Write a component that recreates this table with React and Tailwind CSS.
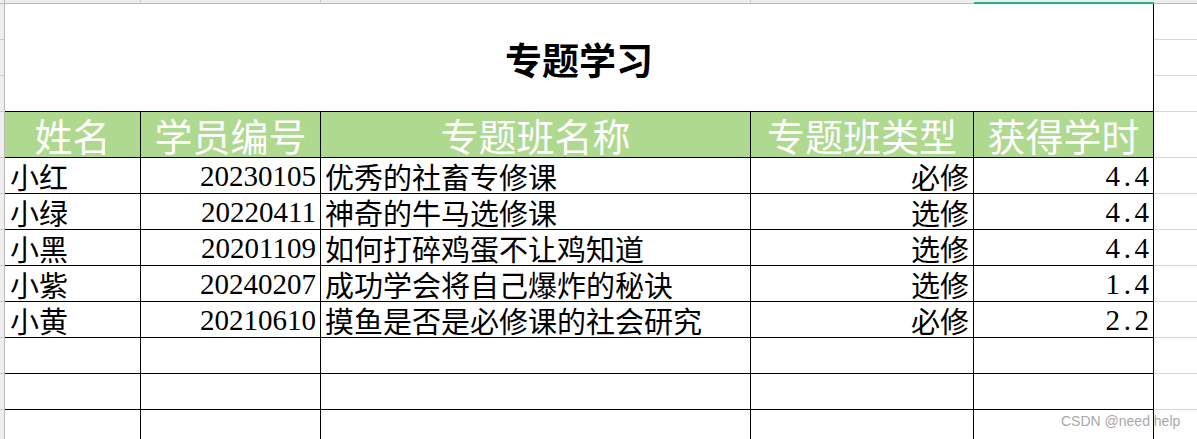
import React from "react";

const cjk = "font-['Noto_Sans_CJK_SC',sans-serif]";
const num = "font-['Liberation_Serif','Noto_Sans_CJK_SC',serif]";

const rows = [
  ["小红", "20230105", "优秀的社畜专修课", "必修", "4.4"],
  ["小绿", "20220411", "神奇的牛马选修课", "选修", "4.4"],
  ["小黑", "20201109", "如何打碎鸡蛋不让鸡知道", "选修", "4.4"],
  ["小紫", "20240207", "成功学会将自己爆炸的秘诀", "选修", "1.4"],
  ["小黄", "20210610", "摸鱼是否是必修课的社会研究", "必修", "2.2"],
];

const headers = ["姓名", "学员编号", "专题班名称", "专题班类型", "获得学时"];

// Excel-ish gutter cell on the left
const Gutter = () => (
  <div className="col-start-1 bg-[#efeeec] border-r border-b border-r-[#bababa] border-b-[#c9c9c9]" />
);

// empty sheet cell right of the table
const Spare = () => <div className="col-start-7 border-b border-[#d6d6d6]" />;

// decimal in SimSun-like half-width cells
const Decimal = ({ value }) => (
  <span>
    {value.split("").map((ch, i) => (
      <span key={i} className="inline-block w-[0.5em] text-center">
        {ch}
      </span>
    ))}
  </span>
);

const cell =
  "border-r border-b border-black flex items-end pb-[2px] leading-none text-[29px] text-black";

const Txt = ({ children }) => (
  <span className="block h-[29px] leading-[29px] whitespace-nowrap">{children}</span>
);

export default function App() {
  return (
    <div className="relative w-[1197px] h-[439px] overflow-hidden bg-white">
      <div className="grid grid-cols-[5px_136px_180px_430px_223px_180px_43px] grid-rows-[4px_36px_36px_36px_46px_repeat(8,36px)]">
        {/* column header strip */}
        <div className="bg-[#efeeec] border-r border-b border-[#bababa]" />
        <div className="bg-[#efeeec] border-r border-b border-r-[#cfcfcf] border-b-[#bababa]" />
        <div className="bg-[#efeeec] border-r border-b border-r-[#cfcfcf] border-b-[#bababa]" />
        <div className="bg-[#efeeec] border-r border-b border-r-[#cfcfcf] border-b-[#bababa]" />
        <div className="bg-[#efeeec] border-b border-[#bababa]" />
        <div className="bg-[#efeeec] border-b-2 border-[#1fb47a]" />
        <div className="bg-[#efeeec] border-b border-[#bababa]" />

        {/* title block */}
        <Gutter />
        <div
          className={`col-span-5 row-span-3 border-r border-b border-black flex justify-center items-start pt-[37px] ${cjk}`}
        >
          <span className="text-[37px] leading-none font-semibold text-black">专题学习</span>
        </div>
        <Spare />
        <Gutter />
        <Spare />
        <Gutter />
        <Spare />

        {/* header row */}
        <Gutter />
        {headers.map((h) => (
          <div
            key={h}
            className={`bg-[#b0d990] border-r border-b border-black flex justify-center items-end pb-[3px] leading-none text-[38px] text-white ${cjk}`}
          >
            {h}
          </div>
        ))}
        <Spare />

        {/* data rows */}
        {rows.map((r) => (
          <React.Fragment key={r[1]}>
            <Gutter />
            <div className={`${cell} pl-[5px] ${cjk}`}>
              <Txt>{r[0]}</Txt>
            </div>
            <div className={`${cell} justify-end pr-[4px] ${num}`}>
              <Txt>{r[1]}</Txt>
            </div>
            <div className={`${cell} pl-[4px] ${cjk}`}>
              <Txt>{r[2]}</Txt>
            </div>
            <div className={`${cell} justify-end pr-[4px] ${cjk}`}>
              <Txt>{r[3]}</Txt>
            </div>
            <div className={`${cell} justify-end pr-[4px] ${num}`}>
              <Txt>
                <Decimal value={r[4]} />
              </Txt>
            </div>
            <Spare />
          </React.Fragment>
        ))}

        {/* empty rows */}
        {[0, 1, 2].map((i) => (
          <React.Fragment key={i}>
            <Gutter />
            <div className="border-r border-b border-black" />
            <div className="border-r border-b border-black" />
            <div className="border-r border-b border-black" />
            <div className="border-r border-b border-black" />
            <div className="border-r border-b border-black" />
            <Spare />
          </React.Fragment>
        ))}
      </div>

      {/* watermark */}
      <div className="absolute left-[1061px] top-[413px] text-[14px] leading-4 text-[#a8a8a8] font-['Liberation_Sans',Arial,sans-serif]">
        CSDN @need help
      </div>
    </div>
  );
}
